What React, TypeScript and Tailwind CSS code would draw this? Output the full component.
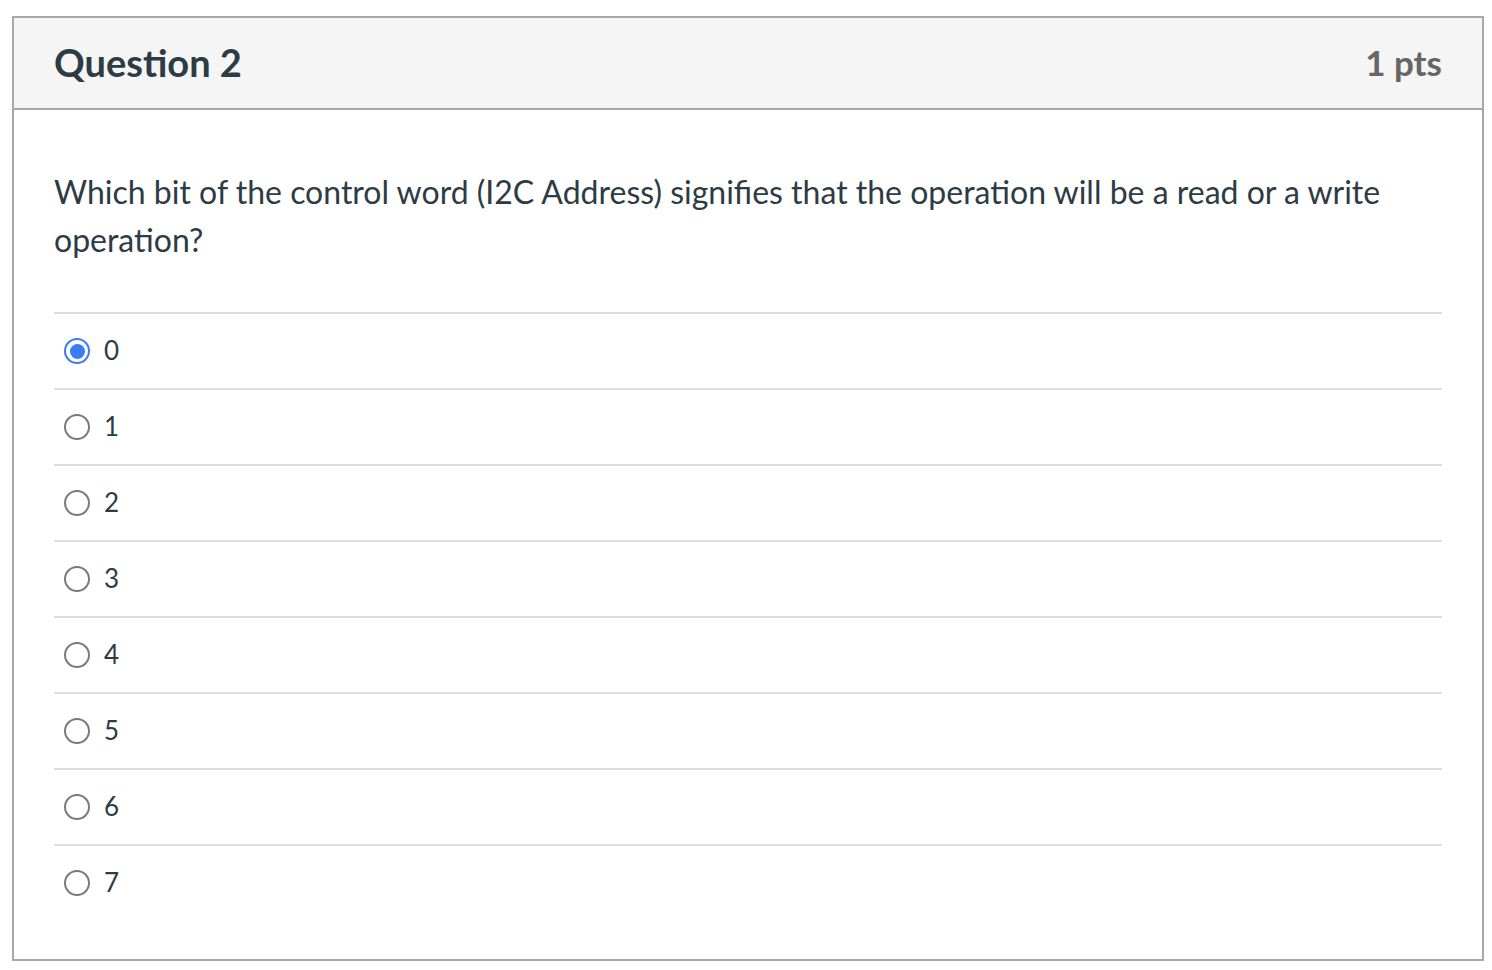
import React from 'react';

const answers = ['0', '1', '2', '3', '4', '5', '6', '7'];

function Radio({ checked }: { checked: boolean }) {
  if (checked) {
    return (
      <span className="flex h-[26px] w-[26px] shrink-0 items-center justify-center rounded-full border-[2.5px] border-[#3a7bf6] bg-white">
        <span className="h-[15px] w-[15px] rounded-full bg-[#3a7bf6]" />
      </span>
    );
  }
  return <span className="h-[26px] w-[26px] shrink-0 rounded-full border-2 border-[#7a7a7a] bg-white" />;
}

export default function App() {
  return (
    <div className="min-h-[970px] bg-white px-3 pt-4" style={{ fontFamily: 'Lato, "Noto Sans", sans-serif' }}>
      <div className="w-[1472px] border-2 border-[#a8a8a8] text-[#2d3b45]">
        {/* header */}
        <div className="flex h-[92px] items-center justify-between border-b-2 border-[#a8a8a8] bg-[#f5f5f5] px-10">
          <h2 className="-mt-[2px] text-[38px] font-bold leading-none">Question 2</h2>
          <span className="-mt-[2px] text-[35px] font-bold leading-none text-[#666666]">1 pts</span>
        </div>

        {/* body */}
        <div className="px-10 pt-[58px] pb-[39px]">
          <p className="text-[32px] leading-[48px]">
            Which bit of the control word (I2C Address) signifies that the operation will be a read or a write operation?
          </p>
          <div className="mt-[48px]">
            {answers.map((a, i) => (
              <div key={a} className="flex h-[76px] items-center gap-[14px] border-t-2 border-[#dddddd] pl-[10px]">
                <Radio checked={i === 0} />
                <span className="-mt-[3px] text-[26px] leading-none">{a}</span>
              </div>
            ))}
          </div>
        </div>
      </div>
    </div>
  );
}
